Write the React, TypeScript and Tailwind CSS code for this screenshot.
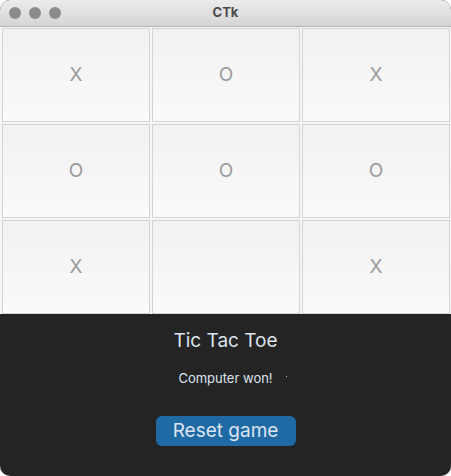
import React from "react";

const board = ["X", "O", "X", "O", "O", "O", "X", "", "X"];

export default function App() {
  return (
    <div className="w-[451px] h-[476px] bg-white overflow-hidden" style={{ fontFamily: "Inter, 'Noto Sans', sans-serif" }}>
      <div className="w-full h-full rounded-[10px] overflow-hidden flex flex-col bg-[#242424]">
        <div className="h-[27px] shrink-0 bg-gradient-to-b from-[#ececec] to-[#d5d5d5] border-b border-[#b3b3b3] relative flex items-center justify-center">
          <div className="absolute left-[9px] top-[7px] flex gap-[8px]">
            <span className="w-[12px] h-[12px] rounded-full bg-[#8b8b8b]" />
            <span className="w-[12px] h-[12px] rounded-full bg-[#8b8b8b]" />
            <span className="w-[12px] h-[12px] rounded-full bg-[#8b8b8b]" />
          </div>
          <span className="text-[13px] font-bold text-[#4a4a4a]">CTk</span>
        </div>
        <div className="bg-[#f6f6f6] pl-[2px] pr-[1px] pt-[1px] grid grid-cols-3 gap-[2px]">
          {board.map((v, i) => (
            <div
              key={i}
              className="h-[94px] border border-[#d3d3d3] bg-gradient-to-b from-[#f1f1f1] to-[#fafafa] flex items-center justify-center text-[19px] text-[#9a9a9a]"
            >
              {v}
            </div>
          ))}
        </div>
        <div className="flex-1 flex flex-col items-center text-[#dce4ee]">
          <div className="mt-[15px] text-[19px] leading-[24px]">Tic Tac Toe</div>
          <div className="mt-[17px] text-[13px] leading-[16px] relative">
            <span>Computer won!</span>
            <span className="absolute left-[108px] top-[6px] w-[1px] h-[1px] bg-[#bbbbbb]" />
          </div>
          <button className="mt-[30px] w-[140px] h-[30px] rounded-[6px] bg-[#1f6aa5] text-[19px] text-[#dce4ee] flex items-center justify-center">
            Reset game
          </button>
        </div>
      </div>
    </div>
  );
}
